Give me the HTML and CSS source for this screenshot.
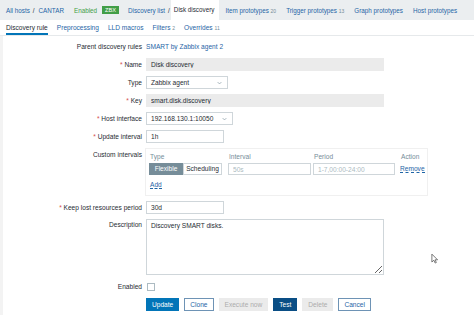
FILE: index.html
```html
<!DOCTYPE html>
<html lang="en">
<head>
  <meta charset="UTF-8" />
  <title>Disk discovery</title>
  <link rel="stylesheet" href="styles.css">
</head>
<body>
  <div class="page">
    <div class="breadcrumbs">
      <a href="#" class="crumb tight">All hosts</a>
      <span class="sep">/</span>
      <a href="#" class="crumb">CANTAR</a>
      <span class="status">Enabled</span>
      <span class="badge">ZBX</span>
      <a href="#" class="crumb tight">Discovery list</a>
      <span class="sep">/</span>
      <span class="crumb current">Disk discovery</span>
      <a href="#" class="crumb">Item prototypes <sup>20</sup></a>
      <a href="#" class="crumb">Trigger prototypes <sup>13</sup></a>
      <a href="#" class="crumb">Graph prototypes</a>
      <a href="#" class="crumb">Host prototypes</a>
    </div>

    <div class="tabs">
      <a href="#" class="tab active">Discovery rule</a>
      <a href="#" class="tab">Preprocessing</a>
      <a href="#" class="tab">LLD macros</a>
      <a href="#" class="tab">Filters <sup>2</sup></a>
      <a href="#" class="tab">Overrides <sup>11</sup></a>
    </div>

    <form class="form">
      <label class="label">Parent discovery rules</label>
      <div class="field"><a href="#" class="link">SMART by Zabbix agent 2</a></div>

      <label class="label"><span class="req">*</span> Name</label>
      <div class="field"><input class="input readonly wide" value="Disk discovery" readonly></div>

      <label class="label">Type</label>
      <div class="field">
        <div class="select type-select">Zabbix agent
          <svg class="chevron" viewBox="0 0 8 5"><path d="M1 1l3 3 3-3" /></svg>
        </div>
      </div>

      <label class="label"><span class="req">*</span> Key</label>
      <div class="field"><input class="input readonly wide" value="smart.disk.discovery" readonly></div>

      <label class="label"><span class="req">*</span> Host interface</label>
      <div class="field">
        <div class="select host-select">192.168.130.1:10050
          <svg class="chevron" viewBox="0 0 8 5"><path d="M1 1l3 3 3-3" /></svg>
        </div>
      </div>

      <label class="label"><span class="req">*</span> Update interval</label>
      <div class="field"><input class="input short" value="1h"></div>

      <label class="label">Custom intervals</label>
      <div class="field">
        <div class="intervals">
          <div class="intervals-head">
            <span>Type</span><span>Interval</span><span>Period</span><span>Action</span>
          </div>
          <div class="intervals-row">
            <div class="segmented">
              <span class="seg on">Flexible</span>
              <span class="seg">Scheduling</span>
            </div>
            <input class="input interval" placeholder="50s">
            <input class="input period" placeholder="1-7,00:00-24:00">
            <a href="#" class="dashed">Remove</a>
          </div>
          <a href="#" class="dashed add">Add</a>
        </div>
      </div>

      <label class="label"><span class="req">*</span> Keep lost resources period</label>
      <div class="field"><input class="input short" value="30d"></div>

      <label class="label top">Description</label>
      <div class="field"><textarea class="textarea">Discovery SMART disks.</textarea></div>

      <label class="label">Enabled</label>
      <div class="field"><span class="checkbox"></span></div>

      <div class="buttons">
        <button type="button" class="btn primary">Update</button>
        <button type="button" class="btn alt">Clone</button>
        <button type="button" class="btn disabled">Execute now</button>
        <button type="button" class="btn primary dark">Test</button>
        <button type="button" class="btn disabled">Delete</button>
        <button type="button" class="btn alt">Cancel</button>
      </div>
    </form>

    <svg class="cursor" viewBox="0 0 8 12"><path d="M1 1v9l2.2-2 1.6 3.2 1.3-.6-1.5-3.1H7.5z" /></svg>
  </div>
</body>
</html>
```

FILE: styles.css
```css
* {
  box-sizing: border-box;
}

body {
  margin: 0;
  font-family: 'Liberation Sans', Arial, sans-serif;
  font-size: 6.6px;
  color: #1f2c33;
  background-color: #f4f4f4;
}

.page {
  width: 474px;
  height: 316px;
  position: relative;
  overflow: hidden;
  background-color: white;
}

a {
  text-decoration: none;
}

sup {
  font-size: 5px;
  vertical-align: baseline;
  color: #768d99;
}

.breadcrumbs {
  height: 20px;
  display: flex;
  align-items: center;
  background-color: #ebeef0;
  padding-left: 6px;
  font-size: 6.3px;
  white-space: nowrap;
}

.crumb {
  color: #1f65a6;
  margin-right: 10px;
}

.crumb.tight {
  margin-right: 3px;
}

.sep {
  color: #1f2c33;
  margin-right: 4px;
}

.crumb.current {
  color: #1f2c33;
  background-color: white;
  height: 20px;
  line-height: 20px;
  padding: 0 5px 0 3px;
  margin-left: -3px;
  margin-right: 6px;
}

.status {
  color: #429e47;
  margin-right: 5px;
}

.badge {
  background-color: #429e47;
  color: white;
  font-size: 5.6px;
  line-height: 8px;
  padding: 0 3px;
  margin-right: 9px;
}

.tabs {
  height: 16px;
  display: flex;
  align-items: stretch;
  padding-left: 6px;
  border-bottom: 1px solid #e6e9eb;
}

.tab {
  display: block;
  color: #1f65a6;
  margin-right: 9px;
  line-height: 14px;
  padding-top: 1px;
  border-bottom: 2px solid transparent;
  white-space: nowrap;
}

.tab.active {
  color: #1f2c33;
  border-bottom-color: #0275b8;
}

.form {
  display: grid;
  grid-template-columns: 139px auto;
  column-gap: 4px;
  row-gap: 5px;
  align-content: start;
  padding-top: 4px;
  border-left: 3px solid #f3f3f3;
  height: 279px;
}

.label {
  text-align: right;
  line-height: 13px;
  height: 13px;
  white-space: nowrap;
}

.label.top {
  line-height: 11px;
}

.req {
  color: #d64e4e;
}

.field {
  display: flex;
  align-items: center;
  min-height: 13px;
}

.link {
  color: #1f65a6;
}

.input {
  font-family: inherit;
  font-size: 6.6px;
  color: #1f2c33;
  height: 13px;
  border: 1px solid #cfd6da;
  background-color: white;
  padding: 0 4px;
  outline: none;
}

.input::placeholder {
  color: #acbbc2;
}

.input.readonly {
  background-color: #ebebeb;
  border-color: #ebebeb;
}

.wide {
  width: 238px;
}

.short {
  width: 78px;
}

.select {
  height: 13px;
  border: 1px solid #cfd6da;
  padding: 0 4px;
  line-height: 11px;
  position: relative;
}

.type-select {
  width: 82px;
}

.host-select {
  width: 87px;
}

.chevron {
  position: absolute;
  right: 5px;
  top: 4px;
  width: 5px;
  height: 4px;
  fill: none;
  stroke: #768d99;
  stroke-width: 1;
}

.intervals {
  width: 283px;
  height: 48px;
  margin-left: -1px;
  border: 1px solid #f0f0f0;
  padding: 0 3px;
}

.intervals-head,
.intervals-row {
  display: grid;
  grid-template-columns: 79px 85px 87px auto;
  align-items: center;
}

.intervals-head {
  height: 14px;
  color: #768d99;
  padding-left: 1px;
}

.intervals-row {
  height: 12px;
}

.segmented {
  display: flex;
}

.seg {
  height: 12px;
  line-height: 10px;
  border: 1px solid #cfd6da;
  background-color: white;
  text-align: center;
  white-space: nowrap;
}

.seg.on {
  width: 34px;
  background-color: #768d99;
  border-color: #768d99;
  color: white;
}

.seg + .seg {
  width: 39px;
}

.interval {
  width: 83px;
  height: 12px;
}

.period {
  width: 82px;
  height: 12px;
}

.dashed {
  color: #1f65a6;
  border-bottom: 1px dashed #1f65a6;
  justify-self: start;
  line-height: 7px;
}

.add {
  display: inline-block;
  margin: 6px 0 0 1px;
}

.textarea {
  display: block;
  width: 238px;
  height: 56px;
  font-family: inherit;
  font-size: 6.6px;
  color: #1f2c33;
  border: 1px solid #cfd6da;
  padding: 2px 4px;
  resize: vertical;
  outline: none;
  margin: 0;
}

.checkbox {
  width: 8px;
  height: 8px;
  border: 1px solid #acbbc2;
  margin-left: 1px;
}

.buttons {
  grid-column: 2;
  display: flex;
  gap: 5px;
}

.btn {
  font-family: inherit;
  font-size: 6.6px;
  height: 13px;
  padding: 0 5px;
  margin: 0;
  border: 1px solid transparent;
  cursor: pointer;
}

.btn.primary {
  background-color: #0275b8;
  color: white;
}

.btn.primary.dark {
  background-color: #0a4e85;
}

.btn.alt {
  background-color: white;
  color: #1f65a6;
  border-color: #6e93b5;
}

.btn.disabled {
  background-color: #ebebeb;
  color: #acacac;
}

.cursor {
  position: absolute;
  left: 431px;
  top: 253px;
  width: 7px;
  height: 11px;
  fill: white;
  stroke: #444;
  stroke-width: 0.8;
}
```
